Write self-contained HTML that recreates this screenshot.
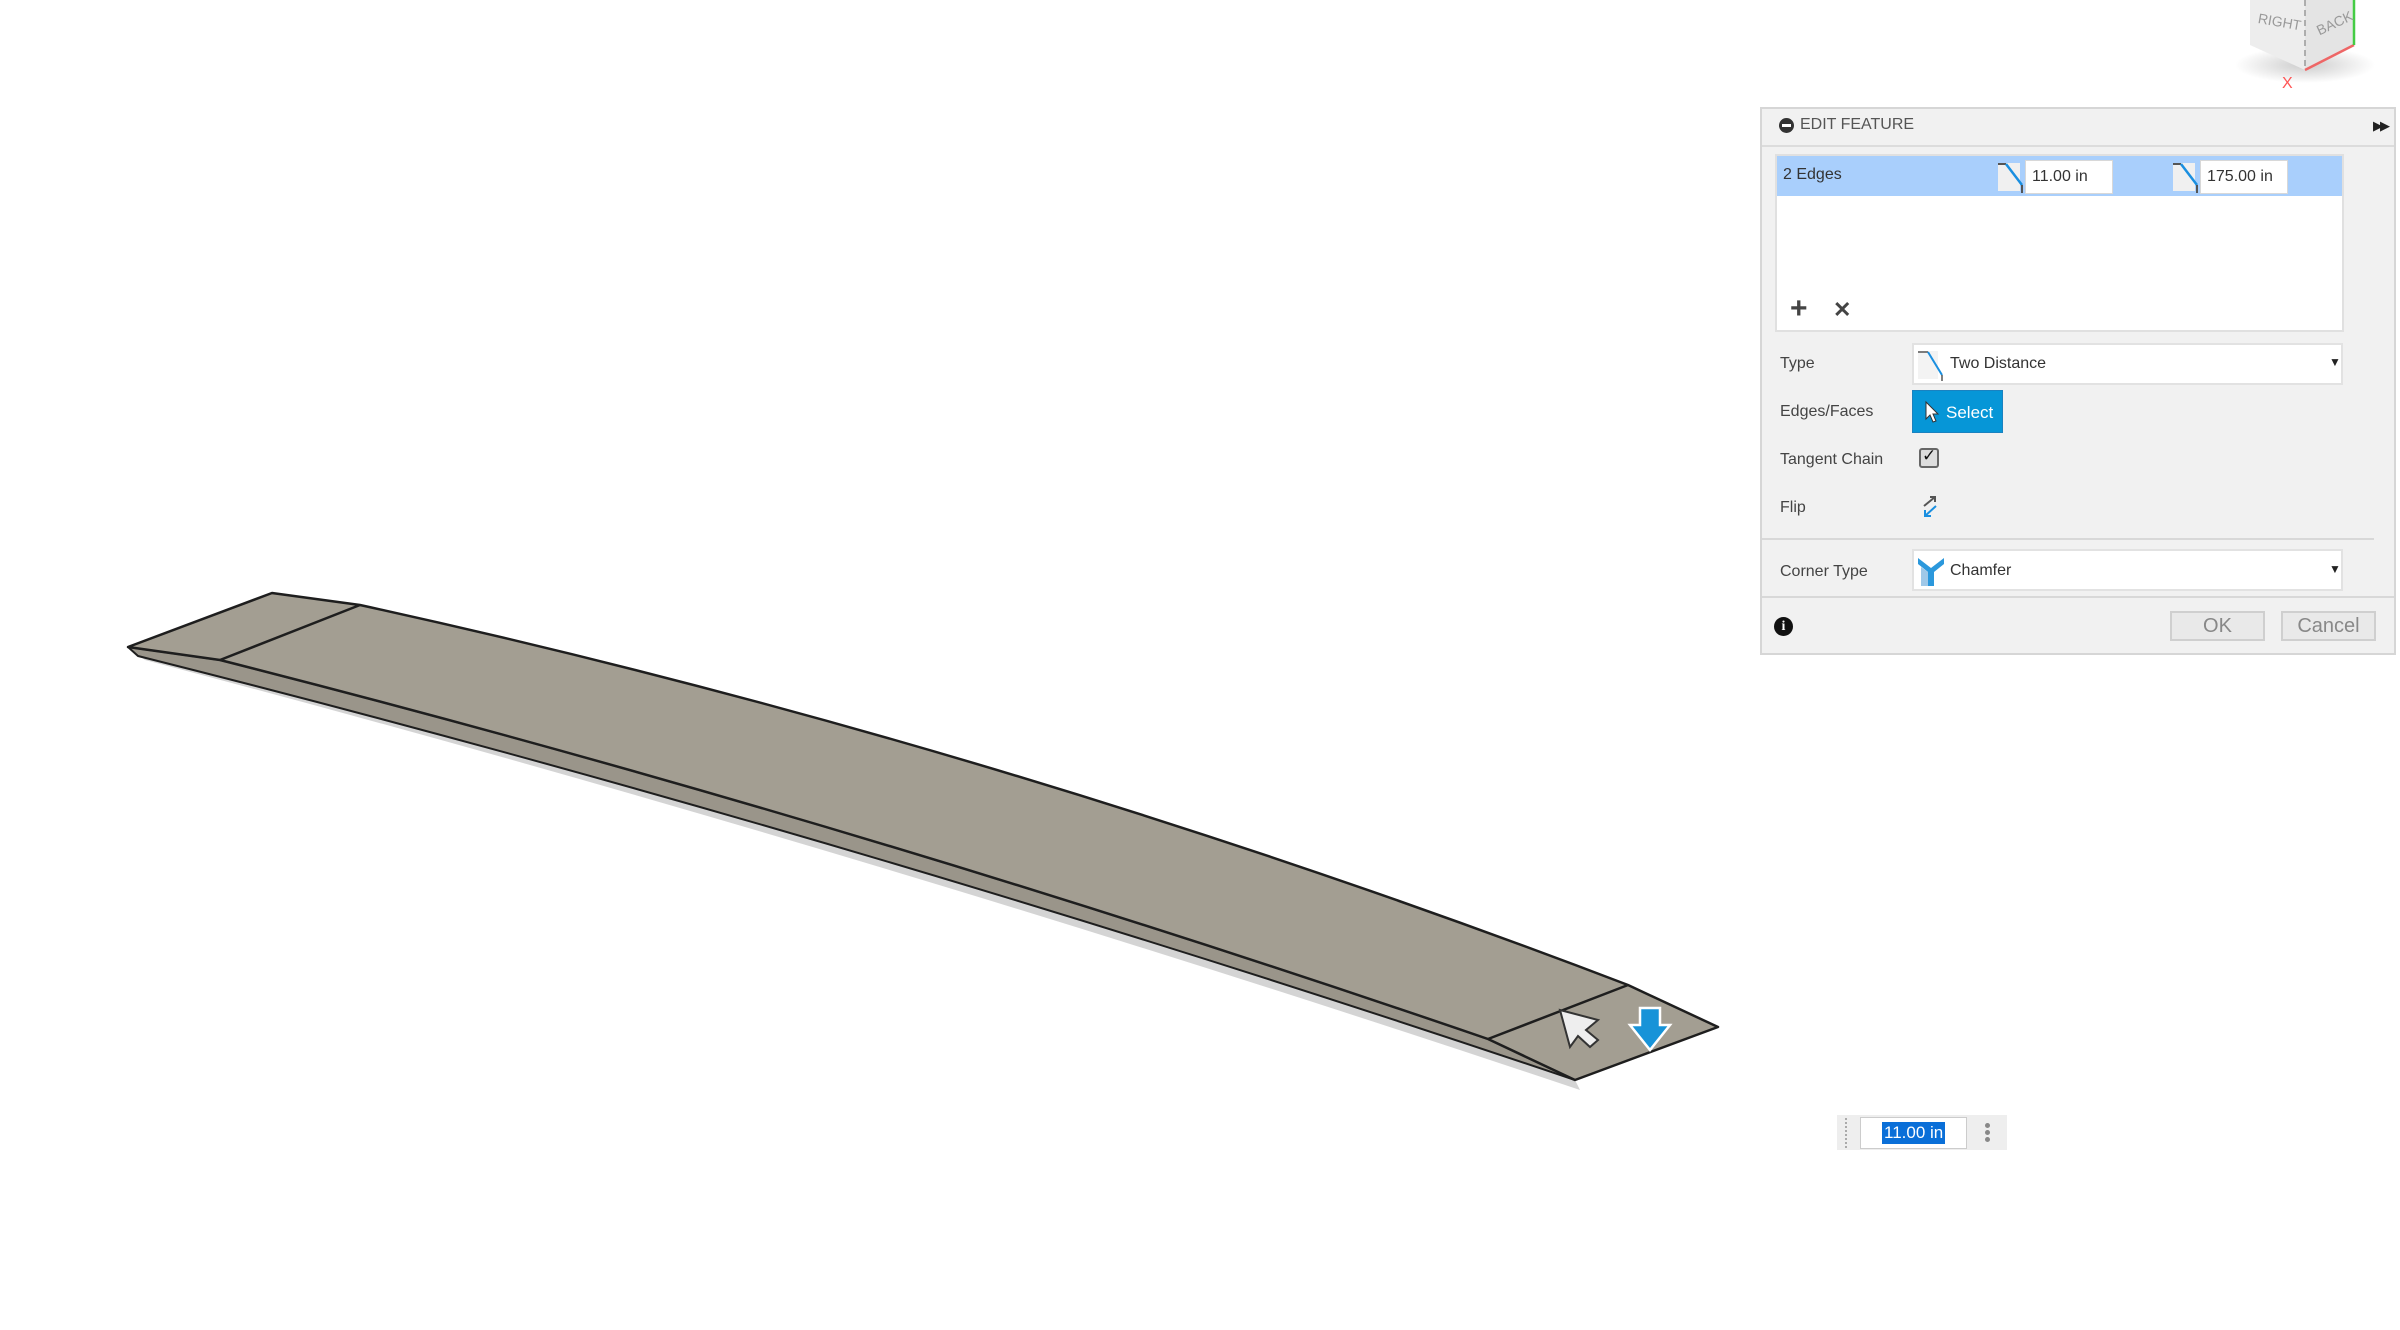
<!DOCTYPE html>
<html><head><meta charset="utf-8"><style>
*{margin:0;padding:0;box-sizing:border-box}
body{width:2400px;height:1330px;background:#fff;position:relative;overflow:hidden;font-family:"Liberation Sans",sans-serif;color:#3c3c3c}
.a{position:absolute}
.lbl{position:absolute;left:1780px;font-size:16px;color:#444}
.inp{position:absolute;background:#fff;border:1px solid #d8d8d8;font-size:16px;color:#333;padding-left:6px;line-height:32px}
.dd{position:absolute;left:1912px;width:431px;height:42px;background:#fff;border:2px solid #e2e2e2;font-size:16px;color:#333}
.btn{position:absolute;top:611px;height:30px;background:#e9e9e9;border:2px solid #cfcfcf;font-size:20px;color:#888;text-align:center;line-height:26px}
</style></head><body>
<svg class="a" style="left:0;top:0" width="1800" height="1200">
  <path d="M145,660 Q850,845 1580,1090 L1575,1080 Q850,832 128,647 Z" fill="#d4d4d4"/>
  <path d="M128,647 L220,660 Q850,820 1488,1039 L1575,1080 Q850,835 138,656 Z" fill="#9a958a" stroke="#1e1e1e" stroke-width="2" stroke-linejoin="round"/>
  <path d="M128,647 L272,593 L360,605 Q1000,745 1628,985 L1718,1027 L1575,1080 L1488,1039 Q850,820 220,660 Z" fill="#a39e92" stroke="#1e1e1e" stroke-width="2.5" stroke-linejoin="round"/>
  <path d="M360,605 L220,660 M1628,985 L1488,1039" stroke="#1e1e1e" stroke-width="2.5"/>
  <path d="M1560,1010 L1598,1020 L1586,1030 L1598,1040 L1590,1047 L1578,1036 L1570,1047 Z" fill="#eee" stroke="#333" stroke-width="2"/>
  <path d="M1640,1008 L1660,1008 L1660,1025 L1670,1025 L1650,1050 L1630,1025 L1640,1025 Z" fill="#1793d8" stroke="#fff" stroke-width="2.5"/>
</svg>
<!-- view cube -->
<svg class="a" style="left:2220px;top:0" width="180" height="100">
  <defs><radialGradient id="sh"><stop offset="0" stop-color="#ccc"/><stop offset="1" stop-color="#fff"/></radialGradient></defs>
  <ellipse cx="85" cy="65" rx="70" ry="18" fill="url(#sh)"/>
  <path d="M30,0 L30,45 L85,70 L85,0 Z" fill="#ededed"/>
  <path d="M85,0 L85,70 L134,45 L134,0 Z" fill="#e4e4e4"/>
  <path d="M85,0 V70" stroke="#999" stroke-dasharray="6,4" stroke-width="1.5"/>
  <path d="M85,70 L134,45" stroke="#e66" stroke-width="2.5"/>
  <path d="M134,0 V45" stroke="#4c4" stroke-width="2.5"/>
  <text x="38" y="25" font-size="14" fill="#999" font-family="Liberation Sans" transform="rotate(10 50 20)">RIGHT</text>
  <text x="96" y="30" font-size="14" fill="#999" font-family="Liberation Sans" transform="rotate(-25 110 25)">BACK</text>
  <text x="62" y="88" font-size="16" fill="#f55" font-family="Liberation Sans">X</text>
</svg>
<!-- panel -->
<div class="a" style="left:1760px;top:107px;width:636px;height:548px;background:#f1f1f1;border:2px solid #d6d6d6"></div>
<div class="a" style="left:1762px;top:145px;width:632px;height:2px;background:#dcdcdc"></div>
<div class="a" style="left:1779px;top:118px;width:15px;height:15px;border-radius:50%;background:#333"></div>
<div class="a" style="left:1782px;top:124px;width:9px;height:3px;background:#fff"></div>
<div class="a" style="left:1800px;top:116px;font-size:16px;color:#555">EDIT FEATURE</div>
<div class="a" style="left:2373px;top:118px;font-size:13px;color:#222;letter-spacing:-3px">▶▶</div>
<div class="a" style="left:1775px;top:154px;width:569px;height:178px;background:#fff;border:2px solid #e0e0e0"></div>
<div class="a" style="left:1777px;top:156px;width:565px;height:40px;background:#a9cffc"></div>
<div class="a" style="left:1783px;top:166px;font-size:16px;color:#333">2 Edges</div>
<svg class="a" style="left:1998px;top:163px" width="26" height="30"><rect x="0" y="0" width="22" height="28" fill="#f0f0f0"/><path d="M0,1 H8" stroke="#555" stroke-width="2"/><path d="M8,1 L24,22" stroke="#1a8fe0" stroke-width="2.5"/><path d="M24,22 V30" stroke="#555" stroke-width="2"/></svg>
<div class="inp" style="left:2025px;top:160px;width:88px;height:34px">11.00 in</div>
<svg class="a" style="left:2173px;top:163px" width="26" height="30"><rect x="0" y="0" width="22" height="28" fill="#f0f0f0"/><path d="M0,1 H8" stroke="#555" stroke-width="2"/><path d="M8,1 L24,22" stroke="#1a8fe0" stroke-width="2.5"/><path d="M24,22 V30" stroke="#555" stroke-width="2"/></svg>
<div class="inp" style="left:2200px;top:160px;width:88px;height:34px">175.00 in</div>
<div class="a" style="left:1790px;top:294px;font-size:30px;color:#444;line-height:30px;font-weight:bold">+</div>
<div class="a" style="left:1833px;top:295px;font-size:22px;color:#444;line-height:30px;font-weight:bold">✕</div>
<div class="lbl" style="top:355px">Type</div>
<div class="dd" style="top:343px"><svg class="a" style="left:4px;top:6px" width="26" height="30"><rect x="0" y="0" width="20" height="28" fill="#f3f3f3"/><path d="M0,1 H10" stroke="#555" stroke-width="1.5"/><path d="M10,1 L24,24" stroke="#1a8fe0" stroke-width="2"/><path d="M24,24 V30" stroke="#555" stroke-width="1.5"/></svg><span class="a" style="left:36px;top:10px">Two Distance</span><span class="a" style="left:415px;top:10px;font-size:12px;color:#222">▼</span></div>
<div class="lbl" style="top:403px">Edges/Faces</div>
<div class="a" style="left:1912px;top:390px;width:91px;height:43px;background:#0696d7;border:1px solid #1a82c0"></div>
<svg class="a" style="left:1924px;top:400px" width="16" height="24"><path d="M2,2 L2,19 L6,15 L9,22 L12,21 L9,14 L14,14 Z" fill="#fff" stroke="#333" stroke-width="1"/></svg>
<div class="a" style="left:1946px;top:403px;font-size:17px;color:#fff">Select</div>
<div class="lbl" style="top:451px">Tangent Chain</div>
<div class="a" style="left:1919px;top:448px;width:20px;height:20px;border:2px solid #666;border-radius:3px;background:#ddd"></div>
<div class="a" style="left:1922px;top:446px;font-size:17px;color:#111">✓</div>
<div class="lbl" style="top:499px">Flip</div>
<svg class="a" style="left:1918px;top:494px" width="24" height="26"><path d="M6,12 L17,3 M12,3 H17 V8" stroke="#555" stroke-width="2" fill="none"/><path d="M18,12 L7,22 M7,16 V22 H13" stroke="#1a8fe0" stroke-width="2" fill="none"/></svg>
<div class="a" style="left:1762px;top:538px;width:612px;height:2px;background:#d8d8d8"></div>
<div class="lbl" style="top:563px">Corner Type</div>
<div class="dd" style="top:549px"><svg class="a" style="left:4px;top:7px" width="26" height="28"><path d="M0,0 L13,10 L26,0 V6 L16,14 V28 H10 V14 L0,6 Z" fill="#2b98dc"/><path d="M10,14 V28 H3 V9 Z" fill="#9fc8e8"/></svg><span class="a" style="left:36px;top:11px">Chamfer</span><span class="a" style="left:415px;top:11px;font-size:12px;color:#222">▼</span></div>
<div class="a" style="left:1762px;top:596px;width:632px;height:2px;background:#d8d8d8"></div>
<div class="a" style="left:1774px;top:617px;width:19px;height:19px;border-radius:50%;background:#111;color:#fff;font-size:14px;font-weight:bold;text-align:center;line-height:19px;font-family:'Liberation Serif',serif">i</div>
<div class="btn" style="left:2170px;width:95px">OK</div>
<div class="btn" style="left:2281px;width:95px">Cancel</div>
<!-- bottom input -->
<div class="a" style="left:1837px;top:1115px;width:170px;height:35px;background:#eee"></div>
<div class="a" style="left:1845px;top:1118px;width:3px;height:30px;border-left:2px dotted #aaa"></div>
<div class="a" style="left:1860px;top:1117px;width:107px;height:32px;background:#fff;border:1px solid #ccc"></div>
<div class="a" style="left:1882px;top:1122px;height:22px;background:#0a6fd8;color:#fff;font-size:17px;line-height:22px;padding:0 2px">11.00 in</div>
<div class="a" style="left:1985px;top:1123px;width:5px;height:5px;border-radius:50%;background:#888;box-shadow:0 7px 0 #888,0 14px 0 #888"></div>
</body></html>
